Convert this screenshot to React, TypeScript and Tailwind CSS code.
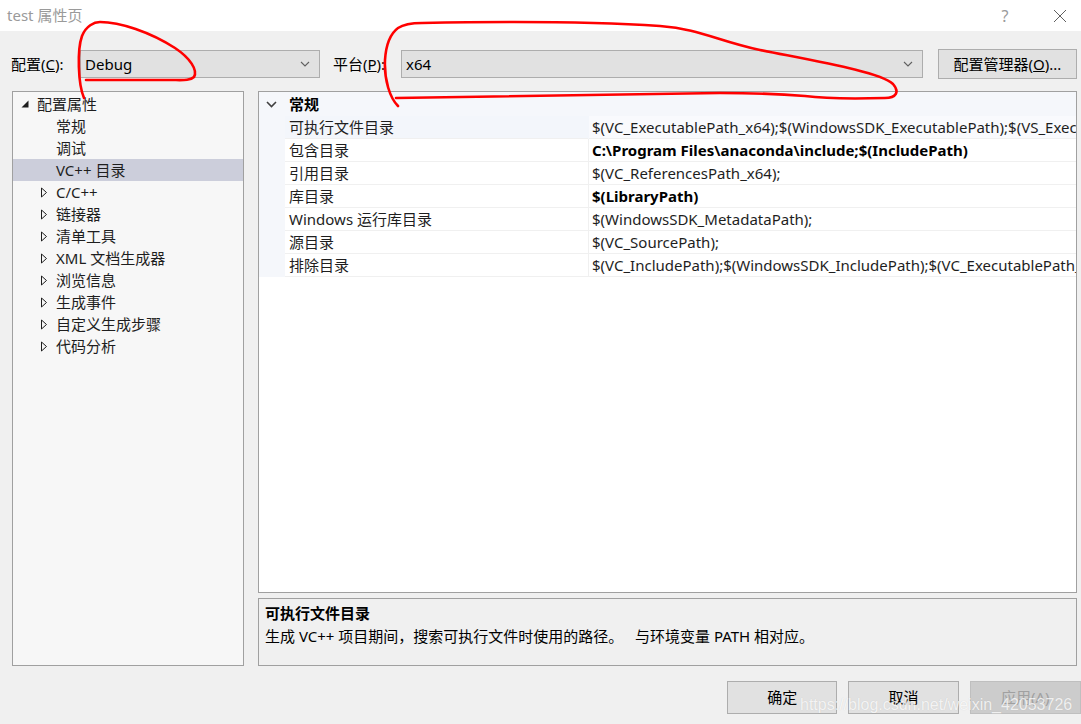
import React from "react";

const font = { fontFamily: '"Noto Sans", "Noto Sans CJK SC", sans-serif' };

function Chevron() {
  return (
    <svg width="10" height="6" viewBox="0 0 10 6" className="shrink-0">
      <path d="M1 1 L5 5 L9 1" fill="none" stroke="#606060" strokeWidth="1.1" />
    </svg>
  );
}

function Combo({ value, width }: { value: string; width: string }) {
  return (
    <div className={`${width} h-[28px] bg-[#e1e1e1] border border-[#adadad] flex items-center justify-between pl-[4px] pr-[9px] text-[15px] text-black`}>
      <span>{value}</span>
      <Chevron />
    </div>
  );
}

function CollapsedTri() {
  return (
    <svg width="8" height="11" viewBox="0 0 8 11" className="shrink-0">
      <path d="M1.5 1 L6.5 5.5 L1.5 10 Z" fill="none" stroke="#1e1e1e" strokeWidth="1" />
    </svg>
  );
}

const treeChildren = ["常规", "调试", "VC++ 目录"];
const treeCollapsed = ["C/C++", "链接器", "清单工具", "XML 文档生成器", "浏览信息", "生成事件", "自定义生成步骤", "代码分析"];

const rows: { name: string; value: string; bold?: boolean }[] = [
  { name: "可执行文件目录", value: "$(VC_ExecutablePath_x64);$(WindowsSDK_ExecutablePath);$(VS_ExecutablePath);$(MSBuild_ExecutablePath)" },
  { name: "包含目录", value: "C:\\Program Files\\anaconda\\include;$(IncludePath)", bold: true },
  { name: "引用目录", value: "$(VC_ReferencesPath_x64);" },
  { name: "库目录", value: "$(LibraryPath)", bold: true },
  { name: "Windows 运行库目录", value: "$(WindowsSDK_MetadataPath);" },
  { name: "源目录", value: "$(VC_SourcePath);" },
  { name: "排除目录", value: "$(VC_IncludePath);$(WindowsSDK_IncludePath);$(VC_ExecutablePath_x64);" },
];

export default function App() {
  return (
    <div className="relative w-[1081px] h-[724px] bg-[#f0f0f0] overflow-hidden text-[14px] text-[#1e1e1e]" style={font}>
      {/* Title bar */}
      <div className="h-[31px] bg-white flex items-center justify-between">
        <span className="pl-[7px] text-[15px] text-[#9a9a9a]">test 属性页</span>
        <div className="flex items-center h-full">
          <span className="text-[16px] text-[#9a9a9a] w-[20px] text-center mr-[38px]">?</span>
          <svg width="14" height="14" viewBox="0 0 14 14" className="mr-[14px]">
            <path d="M1 1 L13 13 M13 1 L1 13" stroke="#606060" strokeWidth="1" />
          </svg>
        </div>
      </div>

      {/* Toolbar */}
      <div className="flex items-center h-[30px] mt-[18px] pl-[11px]">
        <span className="w-[69px] text-[15px] text-black">
          配置(<span className="underline">C</span>):
        </span>
        <Combo value="Debug" width="w-[240px]" />
        <span className="ml-[13px] w-[68px] text-[15px] text-black">
          平台(<span className="underline">P</span>):
        </span>
        <Combo value="x64" width="w-[522px]" />
        <div className="ml-[15px] w-[139px] h-[30px] bg-[#e1e1e1] border border-[#adadad] flex items-center justify-center text-[15px] text-black">
          配置管理器(<span className="underline">O</span>)...
        </div>
      </div>

      {/* Main area */}
      <div className="flex mt-[12px] pl-[12px] h-[575px]">
        {/* Tree */}
        <div className="w-[232px] h-full bg-[#f7f7f7] border border-[#a0a0a0] pt-[1px] text-[15px]">
          <div className="h-[22px] flex items-center">
            <svg width="8" height="8" viewBox="0 0 8 8" className="ml-[8px] mr-[8px] shrink-0">
              <path d="M7.5 0.5 L7.5 7.5 L0.5 7.5 Z" fill="#1e1e1e" />
            </svg>
            <span>配置属性</span>
          </div>
          {treeChildren.map((c, i) => (
            <div key={c} className={`h-[22px] flex items-center pl-[43px] ${i === 2 ? "bg-[#cccedb]" : ""}`}>
              {c}
            </div>
          ))}
          {treeCollapsed.map((c) => (
            <div key={c} className="h-[22px] flex items-center">
              <span className="ml-[27px] mr-[8px] flex items-center"><CollapsedTri /></span>
              <span>{c}</span>
            </div>
          ))}
        </div>

        {/* Right column */}
        <div className="ml-[14px] w-[819px] h-full flex flex-col">
          <div className="h-[503px] bg-white border border-[#a0a0a0] overflow-hidden text-[15px]">
            <div className="h-[24px] bg-[#f5f7fb] flex items-center">
              <svg width="11" height="7" viewBox="0 0 11 7" className="ml-[7px] mr-[12px] shrink-0">
                <path d="M1 1 L5.5 5.5 L10 1" fill="none" stroke="#404040" strokeWidth="1.6" />
              </svg>
              <span className="font-bold text-black">常规</span>
            </div>
            {rows.map((r, i) => (
              <div key={r.name} className="h-[23px] flex bg-[#f5f7fb]">
                <div className="w-[26px] shrink-0" />
                <div className={`w-[303px] shrink-0 flex items-center pl-[4px] border-b border-[#f0f0f0] ${i === 0 ? "bg-[#f3f6fb]" : "bg-white"}`}>
                  {r.name}
                </div>
                <div className={`w-px shrink-0 ${i === 0 ? "bg-[#f3f6fb]" : "bg-[#f0f0f0]"}`} />
                <div className={`flex-1 min-w-0 flex items-center pl-[3px] border-b border-[#f0f0f0] whitespace-nowrap overflow-hidden ${i === 0 ? "bg-[#f9fafd]" : "bg-white"} ${r.bold ? "font-bold text-black" : ""}`}>
                  {r.value}
                </div>
              </div>
            ))}
          </div>
          <div className="mt-[5px] h-[68px] bg-[#f0f0f0] border border-[#a0a0a0] px-[6px] pt-[3px] text-[15px]">
            <div className="font-bold text-black leading-[22px]">可执行文件目录</div>
            <div className="leading-[24px] text-black whitespace-pre">生成 VC++ 项目期间，搜索可执行文件时使用的路径。   与环境变量 PATH 相对应。</div>
          </div>
        </div>
      </div>

      {/* Buttons */}
      <div className="flex mt-[15px] pl-[727px] gap-[11px] text-[15px]">
        <div className="w-[111px] h-[33px] bg-[#e1e1e1] border border-[#adadad] flex items-center justify-center text-black">确定</div>
        <div className="w-[111px] h-[33px] bg-[#e1e1e1] border border-[#adadad] flex items-center justify-center text-black">取消</div>
        <div className="w-[112px] h-[33px] bg-[#cccccc] border border-[#bfbfbf] flex items-center justify-center text-[#a0a0a0]">
          应用(A)
        </div>
      </div>

      {/* Watermark */}
      <div
        className="absolute left-[800px] top-[693px] text-[16px] text-white/80 whitespace-nowrap"
        style={{ fontFamily: '"Liberation Sans", sans-serif', textShadow: "0 0 1px rgba(0,0,0,0.15)" }}
      >
        https://blog.csdn.net/weixin_42053726
      </div>

      {/* Red annotations */}
      <svg className="absolute left-0 top-0 pointer-events-none" width="1081" height="724" viewBox="0 0 1081 724">
        <path
          d="M84 98 C78 84 77 50 82 36 C86 26 94 22 100 22 C120 22 150 32 175 48 C190 58 198 70 194 77 C190 81 182 80 170 80 L86 80"
          fill="none" stroke="#ff0000" strokeWidth="2.6" strokeLinecap="round" strokeLinejoin="round"
        />
        <path
          d="M398 106 C390 98 384 80 385 60 C386 44 390 34 398 28 C404 24 412 23 422 23 C520 21 600 22 660 26 C700 29 715 40 760 50 C820 62 880 72 893 84 C900 92 896 98 885 98 C850 99 820 98 805 96 C780 94 750 93 720 93 C600 94 480 96 396 98"
          fill="none" stroke="#ff0000" strokeWidth="2.6" strokeLinecap="round" strokeLinejoin="round"
        />
      </svg>
    </div>
  );
}
